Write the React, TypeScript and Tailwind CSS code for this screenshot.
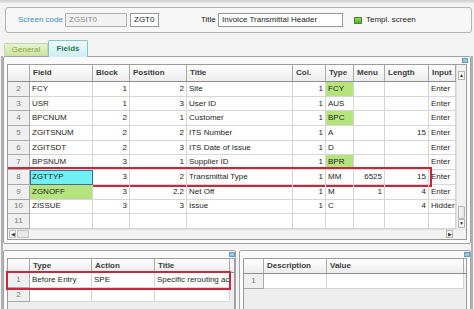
import React from "react";
import clsx from "clsx";

type Row = {
  n: string;
  field: string;
  block: string;
  pos: string;
  title: string;
  col: string;
  type: string;
  menu: string;
  len: string;
  input: string;
  fieldHl?: "cyan" | "green";
  typeHl?: boolean;
  marked?: boolean;
};

const rows: Row[] = [
  { n: "2", field: "FCY", block: "1", pos: "2", title: "Site", col: "1", type: "FCY", menu: "", len: "", input: "Enter", typeHl: true },
  { n: "3", field: "USR", block: "1", pos: "3", title: "User ID", col: "1", type: "AUS", menu: "", len: "", input: "Enter" },
  { n: "4", field: "BPCNUM", block: "2", pos: "1", title: "Customer", col: "1", type: "BPC", menu: "", len: "", input: "Enter", typeHl: true },
  { n: "5", field: "ZGITSNUM", block: "2", pos: "2", title: "ITS Number", col: "1", type: "A", menu: "", len: "15", input: "Enter" },
  { n: "6", field: "ZGITSDT", block: "2", pos: "3", title: "ITS Date of Issue", col: "1", type: "D", menu: "", len: "", input: "Enter" },
  { n: "7", field: "BPSNUM", block: "3", pos: "1", title: "Supplier ID", col: "1", type: "BPR", menu: "", len: "", input: "Enter", typeHl: true },
  { n: "8", field: "ZGTTYP", block: "3", pos: "2", title: "Transmittal Type", col: "1", type: "MM", menu: "6525", len: "15", input: "Enter", fieldHl: "cyan", marked: true },
  { n: "9", field: "ZGNOFF", block: "3", pos: "2.2", title: "Net Off", col: "1", type: "M", menu: "1", len: "4", input: "Enter", fieldHl: "green" },
  { n: "10", field: "ZISSUE", block: "3", pos: "3", title: "Issue", col: "1", type: "C", menu: "", len: "4", input: "Hidden" },
  { n: "11", field: "", block: "", pos: "", title: "", col: "", type: "", menu: "", len: "", input: "" },
];

const HeadCell = ({ w, label }: { w: string; label: string }) => (
  <div className={clsx("h-full shrink-0 border-r border-[#a9a9a9] px-[3px] flex items-center overflow-hidden whitespace-nowrap font-bold text-[#3c3c3c]", w)}>
    {label}
  </div>
);

const Cell = ({ w, children, right, hl }: { w: string; children?: React.ReactNode; right?: boolean; hl?: "cyan" | "green" }) => (
  <div
    className={clsx(
      "h-full shrink-0 border-r border-b border-[#d6d6d6] px-[2px] flex items-center overflow-hidden whitespace-nowrap",
      w,
      right && "justify-end",
      hl === "green" && "bg-[#b6e47c]",
      hl === "cyan" && "bg-[#6ff0f2] outline outline-1 -outline-offset-1 outline-[#3d6f92]"
    )}
  >
    {children}
  </div>
);

const RowNum = ({ n }: { n?: string }) => (
  <div className="h-full w-[22px] shrink-0 border-r border-b border-[#a9a9a9] bg-[#efefef] flex items-center justify-center text-[#7a7a7a]">
    {n}
  </div>
);

const Corner = () => (
  <div className="h-full w-[22px] shrink-0 border-r border-[#a9a9a9]" />
);

const PinIcon = ({ className }: { className: string }) => (
  <div className={clsx("absolute w-[6px] h-[5px] bg-[#9cc6e0] border border-[#5f9cc4]", className)} />
);

const MainGrid = () => (
  <div className="flex flex-col border border-[#9c9c9c] bg-white">
    <div className="flex">
      <div className="w-[448px] flex flex-col overflow-hidden">
        <div className="flex h-[17px] border-b border-[#8e8e8e] bg-gradient-to-b from-white to-[#ececec]">
          <Corner />
          <HeadCell w="w-[63px]" label="Field" />
          <HeadCell w="w-[37px]" label="Block" />
          <HeadCell w="w-[57px]" label="Position" />
          <HeadCell w="w-[106px]" label="Title" />
          <HeadCell w="w-[33px]" label="Col." />
          <HeadCell w="w-[28px]" label="Type" />
          <HeadCell w="w-[31px]" label="Menu" />
          <HeadCell w="w-[44px]" label="Length" />
          <HeadCell w="w-[27px]" label="Input" />
        </div>
        {rows.map((r) => (
          <div key={r.n} className="relative flex h-[14.7px]">
            <RowNum n={r.n} />
            <Cell w="w-[63px]" hl={r.fieldHl}>{r.field}</Cell>
            <Cell w="w-[37px]" right>{r.block}</Cell>
            <Cell w="w-[57px]" right>{r.pos}</Cell>
            <Cell w="w-[106px]">{r.title}</Cell>
            <Cell w="w-[33px]" right>{r.col}</Cell>
            <Cell w="w-[28px]" hl={r.typeHl ? "green" : undefined}>{r.type}</Cell>
            <Cell w="w-[31px]" right>{r.menu}</Cell>
            <Cell w="w-[44px]" right>{r.len}</Cell>
            <Cell w="w-[27px]">{r.input}</Cell>
            {r.marked && (
              <div className="absolute left-[-2px] top-[-3px] w-[426px] h-[20px] border-2 border-[#c42a3c]" />
            )}
          </div>
        ))}
      </div>
      <div className="w-[10px] flex flex-col bg-[#f2f2f2] border-l border-[#e0e0e0]">
        <div className="h-[6px]" />
        <div className="h-[9px] mx-[1px] border border-[#b4b4b4] bg-[#f8f8f8] flex items-center justify-center text-[5px] leading-none text-[#333]">▲</div>
        <div className="flex-1" />
        <div className="h-[13px] mx-[1px] border border-[#b4b4b4] bg-gradient-to-r from-[#f6f6f6] to-[#e2e2e2] rounded-[1px]" />
        <div className="h-[9px] mx-[1px] mb-[1px] border border-[#b4b4b4] bg-[#f8f8f8] flex items-center justify-center text-[5px] leading-none text-[#333]">▼</div>
      </div>
    </div>
    <div className="h-[10px] flex items-center bg-[#f2f2f2] border-t border-[#e0e0e0] pl-[1px] pr-[13px]">
      <div className="w-[7px] h-[8px] border border-[#c4c4c4] bg-[#f8f8f8] flex items-center justify-center text-[5px] leading-none text-[#333]">◀</div>
      <div className="w-[12px] h-[8px] ml-[1px] border border-[#c4c4c4] bg-[#e8e8e8]" />
      <div className="flex-1" />
      <div className="w-[7px] h-[8px] border border-[#b4b4b4] bg-[#f8f8f8] flex items-center justify-center text-[5px] leading-none text-[#333]">▶</div>
    </div>
  </div>
);

const ActionGrid = () => (
  <div className="h-[60px] flex flex-col border border-[#9c9c9c] bg-[#eeeeee]">
    <div className="flex h-[14px] border-b border-[#8e8e8e] bg-gradient-to-b from-white to-[#ececec]">
      <Corner />
      <HeadCell w="w-[62px]" label="Type" />
      <HeadCell w="w-[63px]" label="Action" />
      <HeadCell w="w-[75px]" label="Title" />
    </div>
    <div className="relative flex h-[14.7px] bg-white w-[222px]">
      <RowNum n="1" />
      <Cell w="w-[62px]">Before Entry</Cell>
      <Cell w="w-[63px]">SPE</Cell>
      <Cell w="w-[75px]">Specific rerouting action</Cell>
      <div className="absolute left-[-2px] top-[-2px] w-[225px] h-[19px] border-2 border-[#c42a3c]" />
    </div>
    <div className="flex h-[14.7px] bg-white w-[222px]">
      <RowNum n="2" />
      <Cell w="w-[62px]" />
      <Cell w="w-[63px]" />
      <Cell w="w-[75px]" />
    </div>
  </div>
);

const ParamGrid = () => (
  <div className="h-[60px] flex flex-col border border-[#9c9c9c] bg-[#eeeeee]">
    <div className="flex h-[15px] border-b border-[#8e8e8e] bg-gradient-to-b from-white to-[#ececec]">
      <div className="h-full w-[20px] shrink-0 border-r border-[#a9a9a9]" />
      <HeadCell w="w-[63px]" label="Description" />
      <HeadCell w="w-[137px]" label="Value" />
    </div>
    <div className="flex h-[14.7px] bg-white w-[220px]">
      <div className="h-full w-[20px] shrink-0 border-r border-b border-[#a9a9a9] bg-[#efefef] flex items-center justify-center text-[#7a7a7a]">1</div>
      <Cell w="w-[63px]" />
      <Cell w="w-[137px]" />
    </div>
  </div>
);

export default function App() {
  return (
    <div className="w-[474px] h-[309px] overflow-hidden bg-[#f3f3f3] text-[8px] leading-none text-[#1e1e1e] font-['Liberation_Sans',Arial,sans-serif]">
      <div className="h-[3px] bg-gradient-to-b from-[#cfcfcf] to-[#e6e6e6]" />

      <div className="mt-[4px] ml-[5px] mr-[2px] h-[26px] border border-[#b4b4b4] rounded-[3px] bg-[#f7f7f7] flex items-center">
        <span className="ml-[12px] w-[47px] text-[#3a8fc2]">Screen code</span>
        <div className="w-[62px] h-[14px] border border-[#b0b0b0] bg-[#f2f2f2] text-[#8a8a8a] flex items-center px-[3px]">ZGSIT0</div>
        <div className="ml-[3px] w-[29px] h-[14px] border border-[#9a9a9a] bg-white flex items-center px-[3px]">ZGT0</div>
        <span className="ml-[42px] w-[17px]">Title</span>
        <div className="w-[125px] h-[14px] border border-[#9a9a9a] bg-white flex items-center px-[3px] whitespace-nowrap">Invoice Transmittal Header</div>
        <div className="ml-[11px] w-[8px] h-[7px] border border-[#4f8a2a] bg-gradient-to-b from-[#8ed85a] to-[#5aa832]" />
        <span className="ml-[4px]">Templ. screen</span>
      </div>

      <div className="mt-[7px] h-[16px] pl-[4px] flex items-end">
        <div className="w-[44px] h-[13px] border border-b-0 border-[#c2d6a6] rounded-t-[2px] bg-gradient-to-b from-[#e6f3cf] to-[#c9e3a2] flex items-center justify-center text-[#8fa43a]">
          General
        </div>
        <div className="relative z-10 -mb-px w-[40px] h-[17px] border border-b-0 border-[#86c2cc] rounded-t-[2px] bg-gradient-to-b from-[#eefbfd] to-[#cdeef3] flex items-center justify-center font-bold text-[#2f7a55]">
          Fields
        </div>
      </div>

      <div className="ml-[1px] mr-[1px] border-l-2 border-r-2 border-[#b2b2b2] pl-0">
        <div className="relative ml-0 mr-[0px] h-[188px] border border-[#a4a4a4] rounded-[2px] bg-[#fafafa] pt-[7px] pl-[3px] pr-[3px]">
          <PinIcon className="right-[2px] top-[1px]" />
          <MainGrid />
        </div>

        <div className="mt-[6px] flex gap-[3px] pr-[0px]">
          <div className="relative w-[233px] h-[70px] border border-[#a4a4a4] rounded-[2px] bg-[#fafafa] pt-[7px] pl-[3px]">
            <PinIcon className="right-[0px] top-[1px]" />
            <ActionGrid />
          </div>
          <div className="relative flex-1 h-[70px] border border-[#a4a4a4] rounded-[2px] bg-[#fafafa] pt-[7px] pl-[3px] pr-[3px]">
            <PinIcon className="right-[0px] top-[1px]" />
            <ParamGrid />
          </div>
        </div>
      </div>
    </div>
  );
}
